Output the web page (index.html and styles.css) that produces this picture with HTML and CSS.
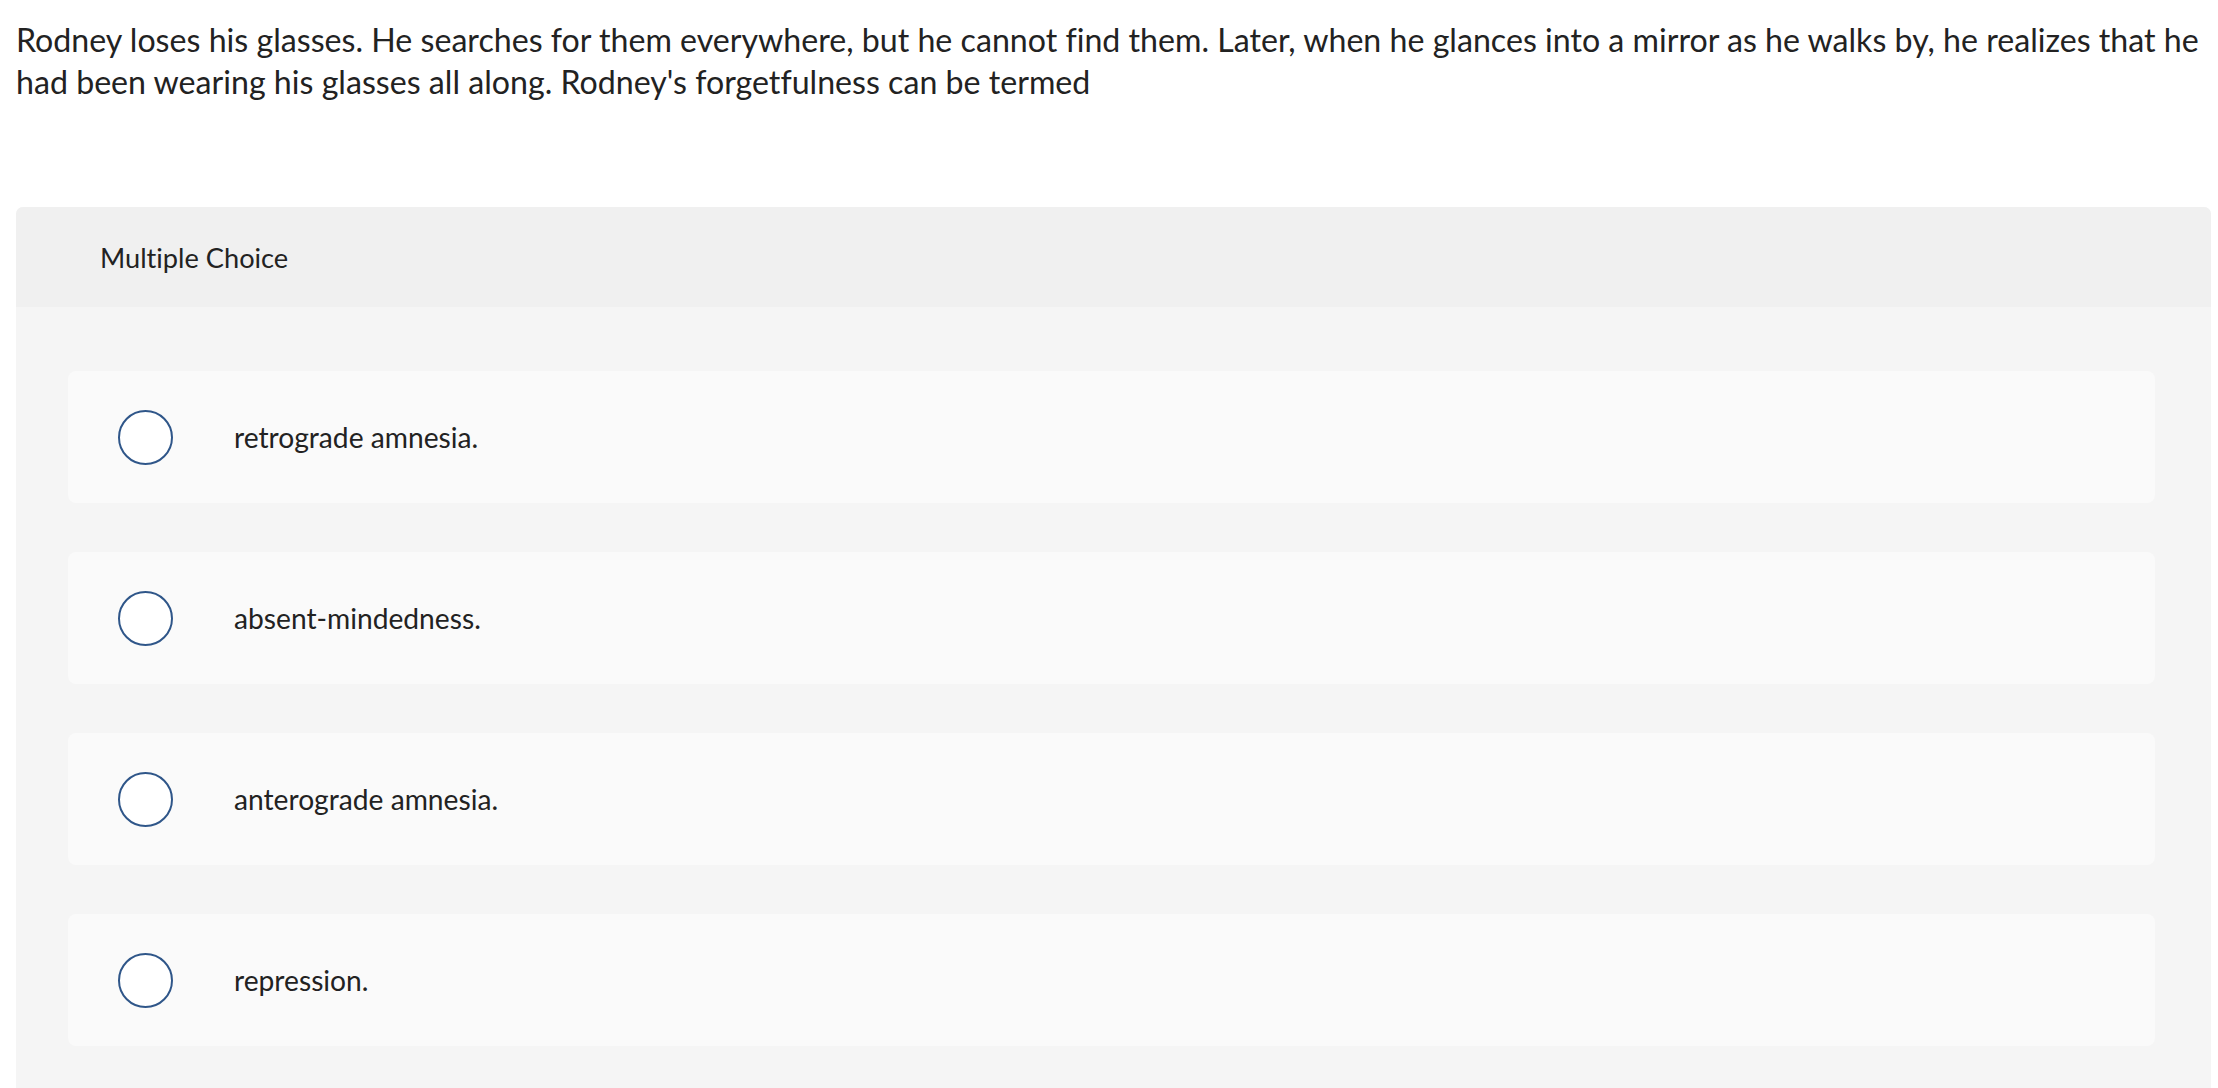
FILE: index.html
```html
<!DOCTYPE html>
<html lang="en">
<head>
<meta charset="utf-8">
<title>Multiple Choice</title>
<link rel="stylesheet" href="styles.css">
</head>
<body>
<main class="page">
  <p class="question">Rodney loses his glasses. He searches for them everywhere, but he cannot find them. Later, when he glances into a mirror as he walks by, he realizes that he had been wearing his glasses all along. Rodney's forgetfulness can be termed</p>
  <section class="card">
    <header class="card-header">Multiple Choice</header>
    <div class="card-body">
      <label class="option"><span class="radio"></span><span class="option-text">retrograde amnesia.</span></label>
      <label class="option"><span class="radio"></span><span class="option-text">absent-mindedness.</span></label>
      <label class="option"><span class="radio"></span><span class="option-text">anterograde amnesia.</span></label>
      <label class="option"><span class="radio"></span><span class="option-text">repression.</span></label>
    </div>
  </section>
</main>
</body>
</html>
```
FILE: styles.css
```css
html, body {
  margin: 0;
  padding: 0;
  background: #ffffff;
}

body {
  font-family: "Lato", "Open Sans", sans-serif;
  font-variant-ligatures: none;
  font-feature-settings: "liga" 0, "clig" 0;
  color: #222222;
  overflow: hidden;
}

.page {
  padding: 19px 7px 0 16px;
}

.question {
  margin: 0;
  font-size: 32.15px;
  line-height: 42px;
}

.card {
  margin-top: 104px;
  border-radius: 7px 7px 0 0;
  overflow: hidden;
  background: #f5f5f5;
}

.card-header {
  height: 100px;
  display: flex;
  align-items: center;
  padding-left: 84px;
  background: #f0f0f0;
  font-size: 27.2px;
}

.card-body {
  display: flex;
  flex-direction: column;
  gap: 49px;
  padding: 64px 56px 60px 52px;
}

.option {
  height: 132px;
  display: flex;
  align-items: center;
  gap: 61px;
  padding-left: 50px;
  background: #fafafa;
  border-radius: 8px;
  font-size: 28.2px;
}

.radio {
  flex: none;
  width: 51px;
  height: 51px;
  border: 2px solid #2f5689;
  border-radius: 50%;
  background: #ffffff;
}
```
